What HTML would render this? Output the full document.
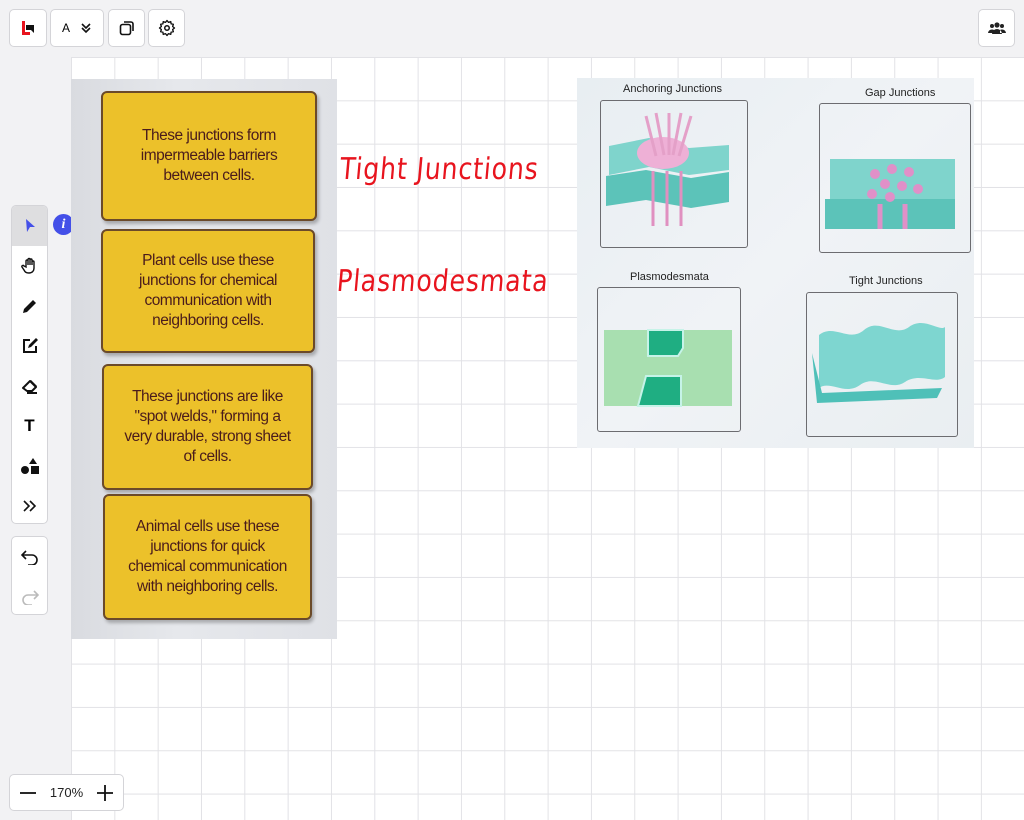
<!DOCTYPE html>
<html><head><meta charset="utf-8"><style>
*{box-sizing:border-box;margin:0;padding:0}
body{width:1024px;height:820px;overflow:hidden;background:#f2f2f4;font-family:"Liberation Sans",sans-serif;position:relative}
.canvas{position:absolute;left:71px;top:57px;width:953px;height:763px;background-color:#fff;
background-image:linear-gradient(to right,#e2e2e6 1px,transparent 1px),linear-gradient(to bottom,#e2e2e6 1px,transparent 1px);
background-size:43.33px 43.33px;background-position:0 0}
.btn{position:absolute;background:#fff;border:1px solid #d4d4d8;border-radius:5px;display:flex;align-items:center;justify-content:center}
.tb{position:absolute;left:11px;width:37px;background:#fff;border:1px solid #d4d4d8;border-radius:5px}
.tb div{height:40px;display:flex;align-items:center;justify-content:center}
.lp{position:absolute;left:71px;top:79px;width:266px;height:560px;background:linear-gradient(90deg,#d9dbe0,#e6e8ec 40%,#dfe1e6)}
.card{position:absolute;background:#ecc12a;border:2px solid #6b4a2a;border-radius:6px;color:#4a1c1c;font-size:15.5px;line-height:20px;text-align:center;display:flex;align-items:center;justify-content:center;letter-spacing:-0.5px;box-shadow:2px 3px 3px rgba(0,0,0,.25)}
.rp{position:absolute;left:577px;top:78px;width:397px;height:370px;background:linear-gradient(135deg,#e8eef2,#f0f3f6 50%,#e9eef1)}
.box{position:absolute;border:1.5px solid #6c6c70;border-radius:3px}
.lbl{position:absolute;font-size:11px;color:#222}
.hw{position:absolute;color:#e8141e;font-family:"DejaVu Sans",sans-serif;font-size:30px;letter-spacing:1px;transform:scaleX(.84) skewX(-6deg);transform-origin:left}
</style></head><body>
<div class="canvas"></div>

<div class="btn" style="left:9px;top:9px;width:38px;height:38px">
<svg width="16" height="16" viewBox="0 0 16 16"><path d="M2 1h3v11h5v3H2z" fill="#e8141e"/><path d="M6 5h8v8l-3-3H6z" fill="#111"/></svg></div>
<div class="btn" style="left:50px;top:9px;width:54px;height:38px;justify-content:space-around;padding:0 6px"><span style="font-size:12px">A</span>
<svg width="12" height="12" viewBox="0 0 12 12"><path d="M2 2l4 4 4-4M2 6l4 4 4-4" stroke="#111" stroke-width="1.6" fill="none"/></svg></div>
<div class="btn" style="left:108px;top:9px;width:37px;height:38px"><svg width="16" height="16" viewBox="0 0 16 16"><rect x="1.5" y="4.5" width="10" height="10" rx="2" stroke="#111" stroke-width="1.6" fill="none"/><path d="M5 2h7a2 2 0 012 2v7" stroke="#111" stroke-width="1.6" fill="none"/></svg></div>
<div class="btn" style="left:148px;top:9px;width:37px;height:38px"><svg width="18" height="18" viewBox="0 0 24 24"><circle cx="12" cy="12" r="3" stroke="#111" stroke-width="2" fill="none"/><path d="M12 2l2 2.5 3-1 .5 3 3 .5-1 3L22 12l-2.5 2 1 3-3 .5-.5 3-3-1L12 22l-2-2.5-3 1-.5-3-3-.5 1-3L2 12l2.5-2-1-3 3-.5.5-3 3 1z" stroke="#111" stroke-width="1.8" fill="none" stroke-linejoin="round"/></svg></div>
<div class="btn" style="left:978px;top:9px;width:37px;height:38px"><svg width="18" height="14" viewBox="0 0 18 14"><circle cx="9" cy="4" r="2.6" fill="#222"/><circle cx="4" cy="5" r="2" fill="#222"/><circle cx="14" cy="5" r="2" fill="#222"/><path d="M4 13a5 5 0 0110 0zM0 12a4 4 0 016-3v3zM18 12a4 4 0 00-6-3v3z" fill="#222"/></svg></div>

<div class="tb" style="top:205px;height:319px">
<div style="background:#dedee0;border-radius:4px 4px 0 0"><svg width="14" height="16" viewBox="0 0 14 16"><path d="M3 1l9 8H7l-3 5z" fill="#4450e8"/></svg></div>
<div><svg width="18" height="18" viewBox="0 0 18 18"><path d="M5 10V4a1 1 0 012 0v4V2.5a1 1 0 012 0V8V3a1 1 0 012 0v5V5a1 1 0 012 0v6c0 3-2 5-5 5s-4-1-5-3l-2-3a1 1 0 012-1z" stroke="#111" stroke-width="1.4" fill="none"/></svg></div>
<div><svg width="18" height="18" viewBox="0 0 18 18"><path d="M2 16l1-4L12 3l3 3-9 9z" fill="#111"/></svg></div>
<div><svg width="18" height="18" viewBox="0 0 18 18"><path d="M9 3H3v12h12V9" stroke="#111" stroke-width="2" fill="none"/><path d="M7 11l1-3 7-7 2 2-7 7z" fill="#111"/></svg></div>
<div><svg width="18" height="18" viewBox="0 0 18 18"><path d="M2 11l7-7 6 6-4 4H6z" stroke="#111" stroke-width="2" fill="none" stroke-linejoin="round"/><path d="M9 4l6 6 1-1-6-6z" fill="#111"/><path d="M6 16h10" stroke="#111" stroke-width="2"/></svg></div>
<div><span style="font-weight:bold;font-size:17px">T</span></div>
<div><svg width="20" height="18" viewBox="0 0 20 18"><path d="M13 1l4 6h-8z" fill="#111"/><circle cx="5" cy="13" r="4" fill="#111"/><rect x="11" y="9" width="8" height="8" fill="#111"/></svg></div>
<div><svg width="16" height="14" viewBox="0 0 16 14"><path d="M2 2l5 5-5 5M8 2l5 5-5 5" stroke="#111" stroke-width="1.6" fill="none"/></svg></div>
</div>
<div style="position:absolute;left:53px;top:214px;width:21px;height:21px;border-radius:50%;background:#4450e8;color:#fff;font:italic bold 14px 'Liberation Serif',serif;display:flex;align-items:center;justify-content:center">i</div>

<div class="tb" style="top:536px;height:79px">
<div><svg width="18" height="16" viewBox="0 0 18 16"><path d="M5 2L1 6l4 4M1 6h10a5 5 0 010 10H7" stroke="#111" stroke-width="1.6" fill="none"/></svg></div>
<div><svg width="18" height="16" viewBox="0 0 18 16"><path d="M13 2l4 4-4 4M17 6H7a5 5 0 000 10h4" stroke="#bbb" stroke-width="1.6" fill="none"/></svg></div>
</div>

<div class="btn" style="left:9px;top:774px;width:115px;height:37px;justify-content:space-between;padding:0 9px">
<svg width="18" height="18"><path d="M1 9h16" stroke="#111" stroke-width="1.8"/></svg>
<span style="font-size:13px;color:#222">170%</span>
<svg width="18" height="18"><path d="M1 9h16M9 1v16" stroke="#111" stroke-width="1.8"/></svg></div>

<div class="lp">
<div class="card" style="left:30px;top:12px;width:216px;height:130px">These junctions form<br>impermeable barriers<br>between cells.</div>
<div class="card" style="left:30px;top:150px;width:214px;height:124px">Plant cells use these<br>junctions for chemical<br>communication with<br>neighboring cells.</div>
<div class="card" style="left:31px;top:285px;width:211px;height:126px">These junctions are like<br>"spot welds," forming a<br>very durable, strong sheet<br>of cells.</div>
<div class="card" style="left:32px;top:415px;width:209px;height:126px">Animal cells use these<br>junctions for quick<br>chemical communication<br>with neighboring cells.</div>
</div>

<div class="hw" style="left:340px;top:152px">Tight Junctions</div>
<div class="hw" style="left:337px;top:264px">Plasmodesmata</div>

<div class="rp">
<div class="lbl" style="left:46px;top:5px">Anchoring Junctions</div>
<div class="box" style="left:23px;top:22px;width:148px;height:148px">
<svg width="145" height="145" viewBox="0 0 145 145"><path d="M8 45l40-8 40 10 40-3 0 25-40 5-40-8-40 8z" fill="#7fd4cc"/><path d="M5 75l40-6 45 8 38-6v30l-38 6-45-8-40 6z" fill="#5cc3b9"/><ellipse cx="62" cy="52" rx="26" ry="16" fill="#eeb0d6"/><path d="M45 15l10 40M55 12l8 42M68 12l0 42M80 12l-8 42M90 15l-12 40" stroke="#e4a0c8" stroke-width="3"/><path d="M52 70v55M66 70v55M80 70v55" stroke="#e090c0" stroke-width="3"/></svg></div>
<div class="lbl" style="left:288px;top:9px">Gap Junctions</div>
<div class="box" style="left:242px;top:25px;width:152px;height:150px">
<svg width="148" height="148" viewBox="0 0 148 148"><path d="M10 55l125 0 0 50-125 0z" fill="#7fd4cc"/><path d="M5 95l130 0 0 30-130 0z" fill="#5cc3b9"/><g fill="#e090c8"><circle cx="55" cy="70" r="5"/><circle cx="72" cy="65" r="5"/><circle cx="89" cy="68" r="5"/><circle cx="65" cy="80" r="5"/><circle cx="82" cy="82" r="5"/><circle cx="98" cy="85" r="5"/><circle cx="52" cy="90" r="5"/><circle cx="70" cy="93" r="5"/></g><path d="M60 100v25M85 100v25" stroke="#e090c8" stroke-width="5"/></svg></div>
<div class="lbl" style="left:53px;top:193px">Plasmodesmata</div>
<div class="box" style="left:20px;top:209px;width:144px;height:145px">
<svg width="142" height="142" viewBox="0 0 142 142"><rect x="6" y="42" width="128" height="76" fill="#a8dfb0"/><path d="M50 42h35v18l-5 8H50z" fill="#1fae82" stroke="#c6f3e8" stroke-width="2"/><path d="M40 118l8-30h35v30z" fill="#1fae82" stroke="#c6f3e8" stroke-width="2"/></svg></div>
<div class="lbl" style="left:272px;top:197px">Tight Junctions</div>
<div class="box" style="left:229px;top:214px;width:152px;height:145px">
<svg width="148" height="142" viewBox="0 0 148 142"><path d="M12 42c15-12 30 8 45-5s30 8 45-3 30 5 36 0v50c-10 8-25-5-40 5s-30-8-45 3-30-5-41 3z" fill="#7ed6d0"/><path d="M5 60l10 40 120-5-5 10-120 5z" fill="#4fc0b8"/></svg></div>
</div>
</body></html>
